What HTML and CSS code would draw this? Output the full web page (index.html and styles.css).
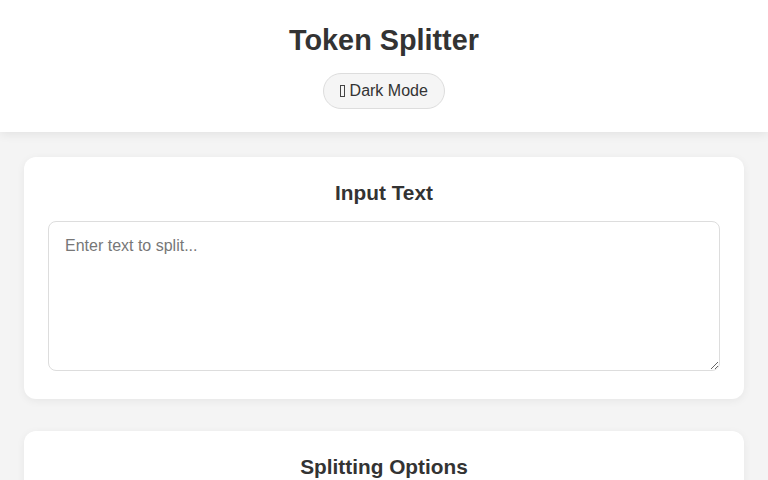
FILE: index.html
```html
<!DOCTYPE html>
<html lang="en">
<head>
  <meta charset="UTF-8">
  <title>Token Splitter</title>
  <link rel="stylesheet" href="styles.css">
</head>
<body>
  <header class="header">
    <h1>Token Splitter</h1>
    <button class="theme-btn" id="themeToggle"><span class="tofu" aria-label="moon"></span> Dark Mode</button>
  </header>

  <main class="main">
    <section class="card">
      <h2>Input Text</h2>
      <textarea id="input" placeholder="Enter text to split..."></textarea>
    </section>

    <section class="card">
      <h2>Splitting Options</h2>
      <div class="options">
        <label><input type="radio" name="mode" checked> Whitespace</label>
      </div>
    </section>
  </main>
</body>
</html>
```

FILE: styles.css
```css
body {
  margin: 0;
  font-family: "Liberation Sans", Arial, sans-serif;
  background-color: #f4f4f4;
  color: #333;
}
.header {
  background: #fff;
  text-align: center;
  padding: 23px 20px 23px;
  box-shadow: 0 2px 10px rgba(0, 0, 0, 0.08);
}
.header h1 {
  margin: 0 0 16px;
  font-size: 28.8px;
  line-height: 34px;
}
.theme-btn {
  font-family: inherit;
  font-size: 16px;
  line-height: 18px;
  color: #333;
  background: #f5f5f5;
  border: 1px solid #ddd;
  border-radius: 20px;
  padding: 8px 16px;
  cursor: pointer;
}
.tofu {
  display: inline-block;
  width: 3px;
  height: 10px;
  border: 1px solid #444;
  vertical-align: -1px;
}
.main {
  padding: 25px 24px;
}
.card {
  background: #fff;
  border-radius: 12px;
  padding: 24px;
  margin-bottom: 32px;
  box-shadow: 0 2px 8px rgba(0, 0, 0, 0.06);
}
.card h2 {
  margin: 0 0 16px;
  text-align: center;
  font-size: 20.8px;
  line-height: 24px;
}
textarea {
  width: 100%;
  height: 150px;
  box-sizing: border-box;
  padding: 15px 16px;
  font-family: inherit;
  font-size: 16px;
  color: #333;
  border: 1px solid #ddd;
  border-radius: 8px;
}
textarea::placeholder {
  color: #777;
}
```
